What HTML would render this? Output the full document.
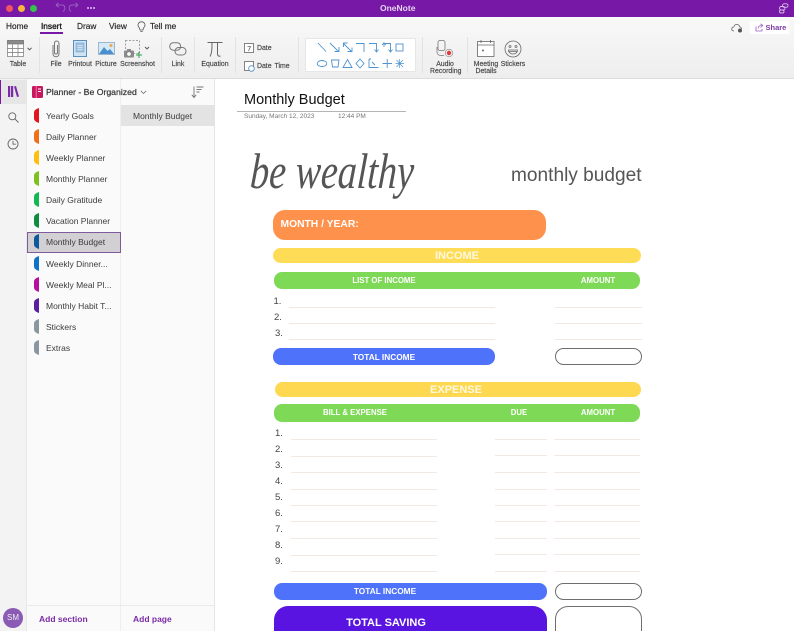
<!DOCTYPE html>
<html><head><meta charset="utf-8"><style>
html,body{margin:0;padding:0;background:#fff}
#p{position:relative;width:794px;height:631px;overflow:hidden;background:#fff;font-family:"Liberation Sans",sans-serif;color:#333}
#p div{position:absolute;white-space:nowrap}
.r{font-size:6.900px;color:#444;text-align:center;line-height:7px;-webkit-text-stroke:.15px #444}
.tab{font-size:8.300px;color:#222;top:21px;-webkit-text-stroke:.15px #222}
.sec{left:46px;font-size:8.500px;color:#3c3c3c;line-height:12px}
.ln{height:1px;background:#f3e9e2}
.num{font-size:9.500px;color:#444;line-height:10px}
.w{color:#fff;font-weight:bold;text-align:center;line-height:1}
.sep{width:1px;top:37px;height:36px;background:#e2e2e2}
svg{position:absolute;overflow:visible}
</style></head><body><div id="p">

<!-- title bar -->
<div style="left:0;top:0;width:794px;height:17px;background:#7719a6"></div>
<div style="left:6px;top:5px;width:7px;height:7px;border-radius:50%;background:#f0555f"></div>
<div style="left:18px;top:5px;width:7px;height:7px;border-radius:50%;background:#f6b73c"></div>
<div style="left:30px;top:5px;width:7px;height:7px;border-radius:50%;background:#35c24a"></div>
<svg style="left:54px;top:2px" width="40" height="12" fill="none" stroke="#9a5cc0" stroke-width="1"><path d="M9 9.500C12 7 11 3 8 3H2M2 3L4.500 .8M2 3L4.500 5.200"/><path d="M17 9.500C14 7 15 3 18 3H24M24 3L21.500 .8M24 3L21.500 5.200"/></svg>
<svg style="left:87px;top:7px" width="9" height="3" fill="#d9bde8"><circle cx="1" cy="1" r="1"/><circle cx="4" cy="1" r="1"/><circle cx="7" cy="1" r="1"/></svg>
<div style="left:380px;top:3px;font-size:8.500px;font-weight:bold;color:#e6d3f0">OneNote</div>
<svg style="left:778px;top:3px" width="12" height="11" fill="none" stroke="#d9bde8" stroke-width=".9"><rect x="4.500" y=".8" width="5.500" height="3.500" rx="1.700"/><rect x="1.500" y="3.500" width="5.500" height="3.500" rx="1.700"/><rect x="1.500" y="7" width="4.500" height="3" rx="1.500"/></svg>

<!-- ribbon -->
<div style="left:0;top:17px;width:794px;height:62px;background:linear-gradient(#f8f8f8,#eeeeee);border-bottom:1px solid #dcdcdc;box-sizing:border-box"></div>
<div class="tab" style="left:6px">Home</div>
<div class="tab" style="left:41px;color:#111;-webkit-text-stroke:.3px #111">Insert</div>
<div style="left:40px;top:32px;width:23px;height:2px;background:#7719a6"></div>
<div class="tab" style="left:77px">Draw</div>
<div class="tab" style="left:109px">View</div>
<svg style="left:137px;top:21px" width="9" height="12" fill="none" stroke="#555" stroke-width=".8"><path d="M2.500 7C1 5.500 .8 4 1.200 3 1.800 1.500 3 .8 4.500 .8 6 .8 7.200 1.500 7.800 3 8.200 4 8 5.500 6.500 7L6 9H3ZM3.300 10.500H5.700"/></svg>
<div class="tab" style="left:150px">Tell me</div>

<svg style="left:7px;top:40px" width="17" height="17" fill="#fff" stroke="#777" stroke-width=".7"><rect x=".5" y=".5" width="16" height="16"/><path d="M.5 8.500H16.500M.5 12.500H16.500M5.500 4.500V16.500M11 4.500V16.500" fill="none"/><rect x=".5" y=".5" width="16" height="3.500" fill="#8a8a8a" stroke="#777"/></svg>
<svg style="left:27px;top:47px" width="5" height="4" fill="none" stroke="#555"><path d="M.5 .8L2.500 2.800 4.500 .8"/></svg>
<div class="r" style="left:6px;top:60.500px;width:24px">Table</div>
<div class="sep" style="left:39px"></div>

<svg style="left:51px;top:40px" width="10" height="18" fill="none" stroke="#777" stroke-width="1"><path d="M2 5V13.500C2 15.500 3.200 16.800 5 16.800 6.800 16.800 8 15.500 8 13.500V3.500C8 2 7 1 5.600 1 4.200 1 3.500 2 3.500 3.500V12.500C3.500 13.500 4.200 14 5 14 5.800 14 6.500 13.500 6.500 12.500V5"/></svg>
<div class="r" style="left:46px;top:60.500px;width:20px">File</div>
<svg style="left:73px;top:40px" width="14" height="17"><rect x=".5" y=".5" width="13" height="16" fill="#cfe3f3" stroke="#5b8fbe"/><rect x="3" y="3" width="8" height="9" fill="#9cc3e2" stroke="#6c9bc4" stroke-width=".5"/><path d="M4.500 5.500H9.500M4.500 7.500H9.500M4.500 9.500H9.500" stroke="#fff" stroke-width=".6"/></svg>
<div class="r" style="left:67px;top:60.500px;width:26px">Printout</div>
<svg style="left:98px;top:42px" width="17" height="13"><rect x=".5" y=".5" width="16" height="12" fill="#d5e9f7" stroke="#7c9fbc" stroke-width=".7"/><path d="M1 12L6 5 9.500 9 12 7 16 12Z" fill="#4a90d0"/><circle cx="13" cy="3.500" r="1.500" fill="#f0a54a"/></svg>
<div class="r" style="left:93px;top:60.500px;width:26px">Picture</div>
<svg style="left:124px;top:40px" width="26" height="19" fill="none"><rect x="1.500" y=".5" width="14" height="13" stroke="#888" stroke-width=".8" stroke-dasharray="2 1.500"/><rect x="0" y="10.500" width="10" height="7" rx="1" fill="#8b8b8b"/><rect x="3" y="9" width="4" height="2" fill="#8b8b8b"/><circle cx="5" cy="14" r="2.200" fill="#fff" stroke="#777" stroke-width=".6"/><path d="M15 12V18M12 15H18" stroke="#2ea24f" stroke-width="1"/><path d="M21 7L23 9 25 7" stroke="#555" stroke-width=".9"/></svg>
<div class="r" style="left:119.500px;top:60.500px;width:36px">Screenshot</div>
<div class="sep" style="left:161px"></div>

<svg style="left:169px;top:42px" width="18" height="14" fill="none" stroke="#777" stroke-width="1"><rect x=".7" y=".7" width="11" height="7.500" rx="3.700"/><rect x="6" y="5.500" width="11" height="7.500" rx="3.700"/></svg>
<div class="r" style="left:168px;top:60.500px;width:20px">Link</div>
<div class="sep" style="left:194px"></div>
<svg style="left:207px;top:41px" width="16" height="16" fill="none" stroke="#666" stroke-width="1"><path d="M.5 1.500H15.500M5 1.500C5 7 5 12 3 15.500M10.500 1.500V13C10.500 15 12 15.500 13.500 15"/></svg>
<div class="r" style="left:198px;top:60.500px;width:34px">Equation</div>
<div class="sep" style="left:235px"></div>

<svg style="left:244px;top:43px" width="10" height="10" fill="#fff" stroke="#666" stroke-width=".8"><rect x=".5" y=".5" width="9" height="9"/><path d="M3.500 3.500H6.500L4.500 8" fill="none"/></svg>
<div class="r" style="left:257px;top:44.500px">Date</div>
<svg style="left:244px;top:61px" width="11" height="11" fill="#fff" stroke="#666" stroke-width=".8"><rect x=".5" y=".5" width="9" height="9"/><circle cx="7.500" cy="7.500" r="2.800" fill="#fff" stroke="#4a88c0"/></svg>
<div class="r" style="left:257px;top:63px">Date</div>
<div class="r" style="left:274.500px;top:63px">Time</div>
<div class="sep" style="left:298px"></div>

<div style="left:305px;top:38px;width:111px;height:34px;background:#fff;border:1px solid #e6e6e6;box-sizing:border-box"></div>
<svg style="left:305px;top:38px" width="111" height="34" fill="none" stroke="#4f93cf" stroke-width=".9">
<path d="M13 5L21 13.500"/>
<path d="M25 5L33.500 13.500M29.500 13.500H34V9"/>
<path d="M38 5L46.500 13.500M38.500 9V5H42.500M42.500 13.500H47V9.500"/>
<path d="M51 5.500H59V14"/>
<path d="M64 5.500H71.500V13.500M69.500 11.500L71.500 14 73.500 11.500"/>
<path d="M79 9V5.500H85.500V14M77 7L79 4.800 81 7M83.500 11.500L85.500 14 87.500 11.500"/>
<rect x="91" y="6" width="7" height="7"/>
<ellipse cx="17" cy="25.500" rx="4.800" ry="3"/>
<path d="M26.500 22H34L33 29H27.500Z"/>
<path d="M42.500 21.500L47 29.500H38Z"/>
<path d="M55 21L59 25.500 55 30 51 25.500Z"/>
<path d="M64 21V29.500H73.500M64 21H66M67 24L70 27"/>
<path d="M77.500 25.500H87M82.200 21V30"/>
<path d="M90.500 25.500H99M94.700 21V30M91.500 22L98 29M98 22L91.500 29" stroke-width=".7"/>
</svg>
<div class="sep" style="left:422px"></div>

<svg style="left:436px;top:40px" width="20" height="18" fill="none"><rect x="2" y=".5" width="7" height="10" rx="2" stroke="#777" stroke-width=".8"/><path d="M1 7V12C1 14.500 3 15.500 5 15.500H8" stroke="#777" stroke-width=".8"/><circle cx="13" cy="13" r="3.800" fill="#eee" stroke="#888" stroke-width=".6"/><circle cx="13" cy="13" r="2.200" fill="#e23b3b"/></svg>
<div class="r" style="left:430px;top:60.500px;width:30px">Audio<br>Recording</div>
<div class="sep" style="left:467px"></div>
<svg style="left:477px;top:40px" width="18" height="17" fill="#fff" stroke="#666" stroke-width=".8"><rect x=".5" y="1.500" width="16.500" height="15"/><path d="M.5 5H17M4 0V3M13.500 0V3" fill="none"/><circle cx="6" cy="10.500" r=".6" fill="#555"/></svg>
<div class="r" style="left:472px;top:60.500px;width:28px">Meeting<br>Details</div>
<svg style="left:504px;top:40px" width="18" height="18" fill="none" stroke="#666" stroke-width=".8"><circle cx="9" cy="9" r="8"/><circle cx="6" cy="6.500" r="1"/><circle cx="12" cy="6.500" r="1"/><path d="M4.500 10H13.500C13.500 12.500 11.500 14 9 14 6.500 14 4.500 12.500 4.500 10ZM5 11.500H13"/></svg>
<div class="r" style="left:499px;top:60.500px;width:28px">Stickers</div>

<svg style="left:731px;top:23px" width="12" height="10" fill="none" stroke="#666" stroke-width=".8"><path d="M3 8C1 8 .5 6.500 .8 5.500 1 4.500 2 4 2.800 4 3.200 2 5 1 6.500 1.500 8 2 8.700 3 8.800 4 10 4.200 10.500 5 10.500 6"/><circle cx="9" cy="7.500" r="2" fill="#555" stroke="none"/></svg>
<div style="left:750px;top:21px;width:39px;height:13px;background:#fff;border-radius:1px"></div>
<svg style="left:755px;top:23px" width="9" height="9" fill="none" stroke="#9a5cc0" stroke-width=".8"><path d="M1 3.500V8H7V6M3 5.500C3.300 3.500 4.500 2.500 6.500 2.500M5.500 .8L7.800 2.500 5.500 4.500"/></svg>
<div style="left:765.500px;top:23px;font-size:7.500px;font-weight:bold;color:#7d3aa5">Share</div>

<!-- left panes -->
<div style="left:0;top:79px;width:27px;height:552px;background:#f3f3f3;border-right:1px solid #e8e8e8;box-sizing:border-box"></div>
<div style="left:0;top:80px;width:27px;height:24px;background:#e6e6e6"></div>
<div style="left:0;top:80px;width:1px;height:24px;background:#7719a6"></div>
<svg style="left:8px;top:86px" width="11" height="11" fill="#7a2ba6"><rect x="0" y="0" width="2.200" height="11"/><rect x="3" y="0" width="2.200" height="11"/><path d="M6 .5L8 0 11 10.500 9 11Z"/></svg>
<svg style="left:8px;top:112px" width="11" height="11" fill="none" stroke="#666" stroke-width=".9"><circle cx="4.300" cy="4.300" r="3.500"/><path d="M7 7L10.500 10.500"/></svg>
<svg style="left:7px;top:138px" width="12" height="12" fill="none" stroke="#666" stroke-width=".9"><circle cx="6" cy="6" r="5"/><path d="M6 2.800V6.200H8.800"/></svg>

<div style="left:27px;top:79px;width:94px;height:552px;background:#fafafa;border-right:1px solid #eeeeee;box-sizing:border-box"></div>
<div style="left:121px;top:79px;width:94px;height:552px;background:#fafafa;border-right:1px solid #e6e6e6;box-sizing:border-box"></div>
<div style="left:121px;top:105px;width:94px;height:21px;background:#e3e3e3"></div>
<div style="left:133px;top:110px;font-size:8.500px;color:#3c3c3c;line-height:12px">Monthly Budget</div>

<svg style="left:32px;top:86px" width="11" height="12"><rect x="0" y="0" width="11" height="12" rx="1.500" fill="#c8175f"/><path d="M6 3H9M6 5.500H9" stroke="#fff" stroke-width=".9"/><rect x="3.800" y="0" width=".7" height="12" fill="#f0a0c0"/></svg>
<div style="left:46px;top:86px;font-size:8.700px;color:#333;line-height:12px;-webkit-text-stroke:.2px #333">Planner - Be Organized</div>
<svg style="left:140px;top:90px" width="7" height="5" fill="none" stroke="#777" stroke-width=".8"><path d="M.8 .8L3.500 3.500 6.200 .8"/></svg>
<svg style="left:191px;top:86px" width="13" height="13" fill="none" stroke="#777" stroke-width=".9"><path d="M3 .5V11M.8 8.800L3 11.500 5.200 8.800M5.500 1H12.500M5.500 3.500H10.500M5.500 6H8.500"/></svg>

<div style="left:27px;top:232px;width:94px;height:21px;background:#d2d0d2;border:1px solid #7d5b9c;box-sizing:border-box"></div>

<svg style="left:33px;top:108px" width="7" height="250">
<defs><path id="t" d="M1 4.500Q1 1.500 6 0V15Q1 13.500 1 10.500Z"/></defs>
<use href="#t" y="0" fill="#e3151e"/>
<use href="#t" y="21" fill="#f0701a"/>
<use href="#t" y="42" fill="#fdc011"/>
<use href="#t" y="63" fill="#7cc11d"/>
<use href="#t" y="84" fill="#13b854"/>
<use href="#t" y="105" fill="#0e8c3f"/>
<use href="#t" y="126" fill="#0a5a9c"/>
<use href="#t" y="148" fill="#0f72c8"/>
<use href="#t" y="169" fill="#b80ea0"/>
<use href="#t" y="190" fill="#5a1fa0"/>
<use href="#t" y="211" fill="#8a979f"/>
<use href="#t" y="232" fill="#8a979f"/>
</svg>

<div class="sec" style="top:110px">Yearly Goals</div>
<div class="sec" style="top:131px">Daily Planner</div>
<div class="sec" style="top:152px">Weekly Planner</div>
<div class="sec" style="top:173px">Monthly Planner</div>
<div class="sec" style="top:194px">Daily Gratitude</div>
<div class="sec" style="top:215px">Vacation Planner</div>
<div class="sec" style="top:236px">Monthly Budget</div>
<div class="sec" style="top:258px">Weekly Dinner...</div>
<div class="sec" style="top:279px">Weekly Meal Pl...</div>
<div class="sec" style="top:300px">Monthly Habit T...</div>
<div class="sec" style="top:321px">Stickers</div>
<div class="sec" style="top:342px">Extras</div>

<div style="left:27px;top:605px;width:188px;height:1px;background:#eaeaea"></div>
<div style="left:3px;top:608px;width:20px;height:20px;border-radius:50%;background:#8a5ab5;color:#eee;font-size:8px;text-align:center;line-height:20px">SM</div>
<div style="left:39px;top:613px;font-size:8.500px;font-weight:bold;color:#7a2ba6;line-height:12px">Add section</div>
<div style="left:133px;top:613px;font-size:8.500px;font-weight:bold;color:#7a2ba6;line-height:12px">Add page</div>

<!-- page -->
<div style="left:244px;top:92px;font-size:14.500px;color:#111;line-height:17px">Monthly Budget</div>
<div style="left:237px;top:110.500px;width:169px;height:1px;background:#b5b5b5"></div>
<div style="left:244px;top:113px;font-size:6.500px;color:#777;line-height:8px">Sunday, March 12, 2023</div>
<div style="left:338px;top:113px;font-size:6.500px;color:#777;line-height:8px">12:44 PM</div>

<div style="left:252px;top:141px;font-family:'Liberation Serif',serif;font-style:italic;font-size:50px;color:#555;line-height:60px;transform:scaleX(.76) skewX(-4deg);transform-origin:0 0">be wealthy</div>
<div style="left:511px;top:165px;font-size:19.100px;color:#555;line-height:22px">monthly budget</div>

<div style="left:273px;top:210px;width:273px;height:30px;border-radius:12px;background:#fe914c"></div>
<div class="w" style="left:280.500px;top:220px;font-size:10.300px;text-align:left">MONTH / YEAR:</div>

<div style="left:273px;top:248px;width:368px;height:15px;border-radius:8px;background:#ffdc55"></div>
<div class="w" style="left:273px;top:250.500px;width:368px;font-size:11px;color:#fff8e0">INCOME</div>
<div style="left:274px;top:272px;width:366px;height:17px;border-radius:8px;background:#7ed957"></div>
<div class="w" style="left:334px;top:276.500px;width:100px;font-size:7.800px">LIST OF INCOME</div>
<div class="w" style="left:558px;top:276.500px;width:80px;font-size:7.800px">AMOUNT</div>

<div class="num" style="left:273.500px;top:297px">1.</div>
<div class="num" style="left:274px;top:313px">2.</div>
<div class="num" style="left:275px;top:329px">3.</div>
<div class="ln" style="left:289px;top:307px;width:206px"></div>
<div class="ln" style="left:289px;top:323px;width:206px"></div>
<div class="ln" style="left:289px;top:339px;width:206px"></div>
<div class="ln" style="left:555px;top:307px;width:87px"></div>
<div class="ln" style="left:555px;top:323px;width:87px"></div>
<div class="ln" style="left:555px;top:339px;width:87px"></div>

<div style="left:273px;top:348px;width:222px;height:17px;border-radius:8px;background:#4f72fb"></div>
<div class="w" style="left:334px;top:352.500px;width:100px;font-size:8.300px">TOTAL INCOME</div>
<div style="left:555px;top:348px;width:87px;height:17px;border-radius:8.500px;border:1px solid #6e6e6e;box-sizing:border-box;background:#fff"></div>

<div style="left:275px;top:382px;width:366px;height:15px;border-radius:8px;background:#ffd851"></div>
<div class="w" style="left:273px;top:384.500px;width:366px;font-size:11px;color:#fff8e0">EXPENSE</div>
<div style="left:274px;top:404px;width:366px;height:18px;border-radius:8px;background:#7ed957"></div>
<div class="w" style="left:305px;top:409px;width:100px;font-size:7.800px">BILL &amp; EXPENSE</div>
<div class="w" style="left:499px;top:409px;width:40px;font-size:7.800px">DUE</div>
<div class="w" style="left:558px;top:409px;width:80px;font-size:7.800px">AMOUNT</div>

<div class="num" style="left:275px;top:429px">1.</div>
<div class="num" style="left:275px;top:445px">2.</div>
<div class="num" style="left:275px;top:461px">3.</div>
<div class="num" style="left:275px;top:477px">4.</div>
<div class="num" style="left:275px;top:493px">5.</div>
<div class="num" style="left:275px;top:509px">6.</div>
<div class="num" style="left:275px;top:525px">7.</div>
<div class="num" style="left:275px;top:541px">8.</div>
<div class="num" style="left:275px;top:557px">9.</div>

<div class="ln" style="left:291px;top:439px;width:146px"></div>
<div class="ln" style="left:291px;top:456px;width:146px"></div>
<div class="ln" style="left:291px;top:472px;width:146px"></div>
<div class="ln" style="left:291px;top:489px;width:146px"></div>
<div class="ln" style="left:291px;top:505px;width:146px"></div>
<div class="ln" style="left:291px;top:521px;width:146px"></div>
<div class="ln" style="left:291px;top:538px;width:146px"></div>
<div class="ln" style="left:291px;top:555px;width:146px"></div>
<div class="ln" style="left:291px;top:571px;width:146px"></div>

<div class="ln" style="left:495px;top:439px;width:52px"></div>
<div class="ln" style="left:495px;top:455px;width:52px"></div>
<div class="ln" style="left:495px;top:472px;width:52px"></div>
<div class="ln" style="left:495px;top:489px;width:52px"></div>
<div class="ln" style="left:495px;top:505px;width:52px"></div>
<div class="ln" style="left:495px;top:521px;width:52px"></div>
<div class="ln" style="left:495px;top:538px;width:52px"></div>
<div class="ln" style="left:495px;top:554px;width:52px"></div>
<div class="ln" style="left:495px;top:571px;width:52px"></div>

<div class="ln" style="left:554px;top:439px;width:86px"></div>
<div class="ln" style="left:554px;top:455px;width:86px"></div>
<div class="ln" style="left:554px;top:472px;width:86px"></div>
<div class="ln" style="left:554px;top:489px;width:86px"></div>
<div class="ln" style="left:554px;top:505px;width:86px"></div>
<div class="ln" style="left:554px;top:521px;width:86px"></div>
<div class="ln" style="left:554px;top:538px;width:86px"></div>
<div class="ln" style="left:554px;top:554px;width:86px"></div>
<div class="ln" style="left:554px;top:571px;width:86px"></div>

<div style="left:274px;top:582.500px;width:273px;height:17px;border-radius:8px;background:#4f72fb"></div>
<div class="w" style="left:335px;top:586.500px;width:100px;font-size:8.300px">TOTAL INCOME</div>
<div style="left:555px;top:582.500px;width:87px;height:17px;border-radius:8.500px;border:1px solid #6e6e6e;box-sizing:border-box;background:#fff"></div>

<div style="left:274px;top:606px;width:273px;height:40px;border-radius:14px;background:#5a14e2"></div>
<div class="w" style="left:316px;top:617.500px;width:140px;font-size:11px">TOTAL SAVING</div>
<div style="left:555px;top:606px;width:87px;height:40px;border-radius:13px;border:1px solid #6e6e6e;box-sizing:border-box;background:#fff"></div>

</div></body></html>
